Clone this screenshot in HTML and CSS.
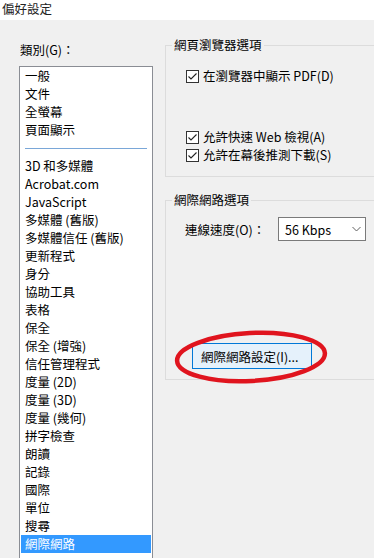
FILE: index.html
```html
<!DOCTYPE html>
<html lang="zh-Hant">
<head>
<meta charset="utf-8">
<title>偏好設定</title>
<link rel="stylesheet" href="styles.css">
</head>
<body>
<div class="window">
  <div class="titlebar">偏好設定</div>
  <div class="main">
    <div class="left">
      <div class="cat-label">類別(G)：</div>
      <div class="list">
        <div class="item">一般</div>
        <div class="item">文件</div>
        <div class="item">全螢幕</div>
        <div class="item">頁面顯示</div>
        <div class="sep"></div>
        <div class="item">3D 和多媒體</div>
        <div class="item">Acrobat.com</div>
        <div class="item">JavaScript</div>
        <div class="item">多媒體 (舊版)</div>
        <div class="item">多媒體信任 (舊版)</div>
        <div class="item">更新程式</div>
        <div class="item">身分</div>
        <div class="item">協助工具</div>
        <div class="item">表格</div>
        <div class="item">保全</div>
        <div class="item">保全 (增強)</div>
        <div class="item">信任管理程式</div>
        <div class="item">度量 (2D)</div>
        <div class="item">度量 (3D)</div>
        <div class="item">度量 (幾何)</div>
        <div class="item">拼字檢查</div>
        <div class="item">朗讀</div>
        <div class="item">記錄</div>
        <div class="item">國際</div>
        <div class="item">單位</div>
        <div class="item">搜尋</div>
        <div class="item selected">網際網路</div>
      </div>
    </div>
    <div class="right">
      <fieldset class="group g1">
        <legend>網頁瀏覽器選項</legend>
        <div class="check row1"><span class="box"><svg width="11" height="11" viewBox="0 0 11 11"><polyline points="1.5,5.5 4,8 9.5,2.5" fill="none" stroke="#222" stroke-width="1.1"/></svg></span>在瀏覽器中顯示 PDF(D)</div>
        <div class="check row2"><span class="box"><svg width="11" height="11" viewBox="0 0 11 11"><polyline points="1.5,5.5 4,8 9.5,2.5" fill="none" stroke="#222" stroke-width="1.1"/></svg></span>允許快速 Web 檢視(A)</div>
        <div class="check"><span class="box"><svg width="11" height="11" viewBox="0 0 11 11"><polyline points="1.5,5.5 4,8 9.5,2.5" fill="none" stroke="#222" stroke-width="1.1"/></svg></span>允許在幕後推測下載(S)</div>
      </fieldset>
      <fieldset class="group g2">
        <legend>網際網路選項</legend>
        <div class="speed-row">
          <span class="speed-label">連線速度(O)：</span>
          <div class="combo">
            <span class="combo-text">56 Kbps</span>
            <span class="combo-btn"><svg width="9" height="6" viewBox="0 0 9 6"><polyline points="0.5,1 4.5,5 8.5,1" fill="none" stroke="#606060" stroke-width="1"/></svg></span>
          </div>
        </div>
        <button class="btn">網際網路設定(I)...</button>
      </fieldset>
    </div>
  </div>
  <svg class="annot" width="374" height="558" viewBox="0 0 374 558">
    <ellipse cx="251" cy="357" rx="74" ry="24" transform="rotate(-3 251 357)" fill="none" stroke="#e0141e" stroke-width="4.5"/>
  </svg>
</div>
</body>
</html>
```
FILE: styles.css
```css
html, body {
  margin: 0;
  padding: 0;
  overflow: hidden;
}
body {
  font-family: "Noto Sans CJK TC", "Noto Sans", sans-serif;
  font-size: 12.5px;
  color: #000;
  background: #f0f0f0;
}
.window {
  position: relative;
  width: 374px;
  height: 558px;
  overflow: hidden;
  background: #f0f0f0;
}
.titlebar {
  height: 20px;
  line-height: 18px;
  background: #fff;
  padding-left: 2px;
  color: #222;
}
.main {
  display: flex;
  align-items: flex-start;
}
.left {
  flex: 0 0 auto;
  padding-left: 19px;
  padding-top: 22px;
}
.cat-label {
  height: 16px;
  line-height: 16px;
  margin-left: 1px;
  margin-bottom: 8px;
}
.list {
  box-sizing: border-box;
  width: 134px;
  height: 520px;
  background: #fff;
  border: 1px solid #8a8d94;
  padding: 0 1px;
  overflow: hidden;
}
.item {
  height: 18px;
  line-height: 18px;
  padding-left: 4px;
  white-space: nowrap;
}
.item.selected {
  background: #3399ff;
  color: #fff;
}
.sep {
  height: 1px;
  background: #7aa7d8;
  margin: 9px 4px 8px 4px;
}
.right {
  flex: 0 0 auto;
  margin-left: 12px;
  padding-top: 17px;
}
.group {
  box-sizing: border-box;
  width: 260px;
  margin: 0;
  padding: 0;
  border: 1px solid #dcdcdc;
  border-right: none;
}
.group legend {
  margin-left: 6px;
  padding: 0 2px;
  height: 16px;
  line-height: 16px;
}
.g1 {
  padding-bottom: 12px;
}
.g2 {
  margin-top: 15px;
  padding-bottom: 10px;
}
.check {
  display: flex;
  align-items: center;
  height: 18px;
  line-height: 18px;
  padding-left: 20px;
  white-space: nowrap;
}
.row1 {
  margin-top: 14px;
}
.row2 {
  margin-top: 43px;
}
.box {
  box-sizing: border-box;
  width: 13px;
  height: 13px;
  border: 1px solid #333;
  background: #fff;
  margin-right: 4px;
  display: flex;
  align-items: center;
  justify-content: center;
}
.box svg {
  display: block;
}
.speed-row {
  display: flex;
  align-items: center;
  margin-top: 9px;
  padding-left: 19px;
  height: 24px;
}
.speed-label {
  flex: 0 0 93px;
  white-space: nowrap;
}
.combo {
  box-sizing: border-box;
  width: 88px;
  height: 24px;
  border: 1px solid #7a7a7a;
  background: #fff;
  display: flex;
  align-items: center;
}
.combo-text {
  flex: 1;
  padding-left: 6px;
  white-space: nowrap;
}
.combo-btn {
  width: 18px;
  height: 22px;
  display: flex;
  align-items: center;
  justify-content: center;
}
.combo-btn svg {
  display: block;
}
.btn {
  display: block;
  box-sizing: border-box;
  margin: 102px 0 0 26px;
  width: 120px;
  height: 26px;
  padding: 0 0 0 8px;
  text-align: left;
  font: inherit;
  color: #000;
  background: #e5f1fb;
  border: 1px solid #0078d7;
  border-radius: 0;
}
.annot {
  position: absolute;
  left: 0;
  top: 0;
  pointer-events: none;
}
```
